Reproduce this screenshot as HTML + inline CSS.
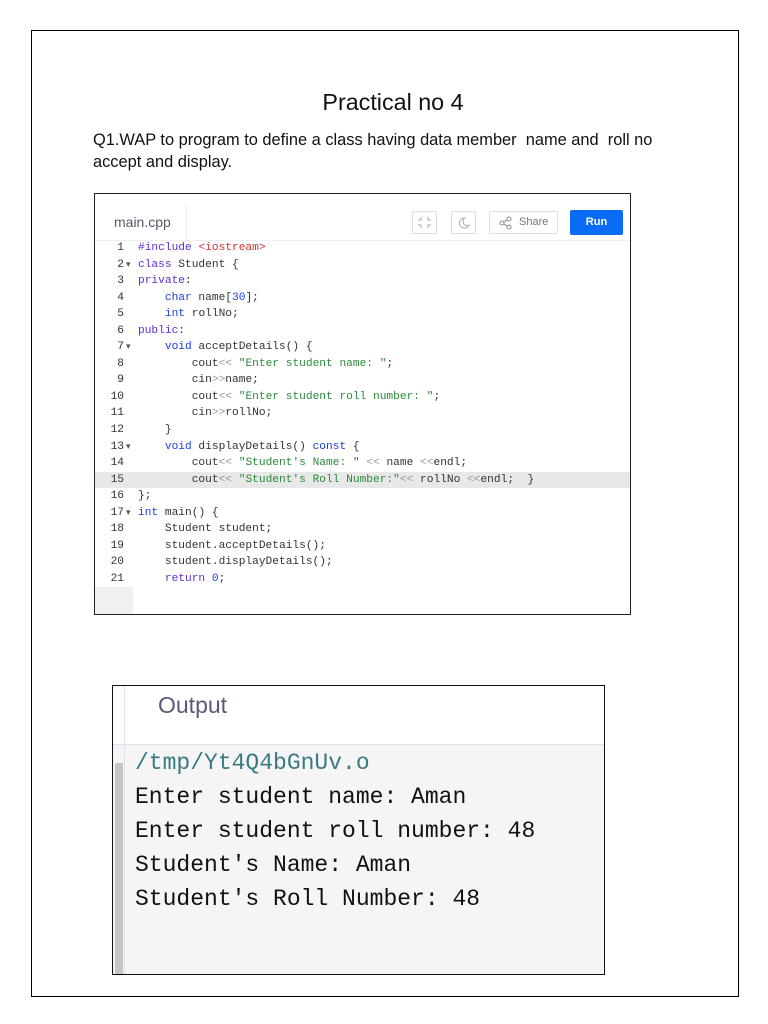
<!DOCTYPE html>
<html><head><meta charset="utf-8"><style>
*{margin:0;padding:0;box-sizing:border-box}
body{width:768px;height:1024px;background:#fff;position:relative;font-family:"Liberation Sans",sans-serif;overflow:hidden}
.abs{position:absolute}
.page{left:31px;top:30px;width:708px;height:967px;border:1px solid #000}
.title{left:0;width:786px;text-align:center;top:89px;font-size:23.3px;color:#111}
.q{left:93px;top:129px;font-size:16.4px;line-height:22px;color:#111}
.code{left:94px;top:193px;width:537px;height:422px;border:1px solid #222;background:#fff}
.tabbar{left:0;top:11px;width:535px;height:36px;border-bottom:1px solid #eceef2}
.tab{left:0;top:0;width:92px;height:36px;border-right:1px solid #eceef2;font-size:14px;color:#55596a;padding:9px 0 0 19px}
.btn{top:6px;height:23px;border:1px solid #dcdfe6;border-radius:2px;background:#fff}
.run{top:5px;height:25px;background:#0a6cf5;color:#fff;font-size:11px;font-weight:bold;text-align:center;line-height:25px;border-radius:2px}
.lines{left:0;top:46px;width:535px;font-family:"Liberation Mono",monospace;font-size:11.2px;color:#333}
.ln{height:16.55px;line-height:16.55px;white-space:pre;position:relative}
.n{display:inline-block;width:29px;text-align:right;color:#333;margin-right:14px}
.d{position:absolute;left:31px;top:0;color:#555;font-size:9px}
.k{color:#5a2fd6}.b{color:#1b3fe0}.s{color:#2a8a3a}.r{color:#d03030}.g{color:#999}
.hl{background:#e8e8e8}
.out{left:112px;top:685px;width:493px;height:290px;border:1px solid #111;background:#f5f5f5}
.ohead{left:0;top:0;width:491px;height:59px;background:#fff;border-bottom:1px solid #dde3ee}
.otxt{font-family:"Liberation Mono",monospace;font-size:23px;color:#111;white-space:pre;left:22px}
</style></head><body>
<div class="abs page"></div>
<div class="abs title">Practical no 4</div>
<div class="abs q">Q1.WAP to program to define a class having data member &nbsp;name and &nbsp;roll no<br>accept and display.</div>
<div class="abs code">
 <div class="abs tabbar">
  <div class="abs tab">main.cpp</div>
  <div class="abs btn" style="left:317px;width:25px"><svg width="23" height="21"><path d="M8 5v3H5M15 5v3h3M8 16v-3H5M15 16v-3h3" stroke="#aaa" fill="none"/></svg></div>
  <div class="abs btn" style="left:356px;width:25px"><svg width="23" height="21"><path d="M13 6a5 5 0 1 0 4 7a4 4 0 0 1-4-7z" stroke="#aaa" fill="none"/></svg></div>
  <div class="abs btn" style="left:394px;width:69px;font-size:11px;color:#777;line-height:21px;padding-left:29px">Share<svg class="abs" style="left:8px;top:4px" width="16" height="14"><circle cx="4" cy="7" r="2" stroke="#888" fill="none"/><circle cx="11" cy="3" r="2" stroke="#888" fill="none"/><circle cx="11" cy="11" r="2" stroke="#888" fill="none"/><path d="M6 6l3-2M6 8l3 2" stroke="#888"/></svg></div>
  <div class="abs run" style="left:475px;width:53px">Run</div>
 </div>
 <div class="abs" style="left:0;top:393px;width:38px;height:27px;background:#f0f0f0"></div>
 <div class="abs lines">
<div class="ln"><span class="n">1</span><span class="k">#include</span> <span class="r">&lt;iostream&gt;</span></div>
<div class="ln"><span class="n">2</span><span class="d">▾</span><span class="k">class</span> Student {</div>
<div class="ln"><span class="n">3</span><span class="k">private</span>:</div>
<div class="ln"><span class="n">4</span>    <span class="b">char</span> name[<span class="b">30</span>];</div>
<div class="ln"><span class="n">5</span>    <span class="b">int</span> rollNo;</div>
<div class="ln"><span class="n">6</span><span class="k">public</span>:</div>
<div class="ln"><span class="n">7</span><span class="d">▾</span>    <span class="b">void</span> acceptDetails() {</div>
<div class="ln"><span class="n">8</span>        cout<span class="g">&lt;&lt;</span> <span class="s">"Enter student name: "</span>;</div>
<div class="ln"><span class="n">9</span>        cin<span class="g">&gt;&gt;</span>name;</div>
<div class="ln"><span class="n">10</span>        cout<span class="g">&lt;&lt;</span> <span class="s">"Enter student roll number: "</span>;</div>
<div class="ln"><span class="n">11</span>        cin<span class="g">&gt;&gt;</span>rollNo;</div>
<div class="ln"><span class="n">12</span>    }</div>
<div class="ln"><span class="n">13</span><span class="d">▾</span>    <span class="b">void</span> displayDetails() <span class="b">const</span> {</div>
<div class="ln"><span class="n">14</span>        cout<span class="g">&lt;&lt;</span> <span class="s">"Student's Name: "</span> <span class="g">&lt;&lt;</span> name <span class="g">&lt;&lt;</span>endl;</div>
<div class="ln hl"><span class="n">15</span>        cout<span class="g">&lt;&lt;</span> <span class="s">"Student's Roll Number:"</span><span class="g">&lt;&lt;</span> rollNo <span class="g">&lt;&lt;</span>endl;  }</div>
<div class="ln"><span class="n">16</span>};</div>
<div class="ln"><span class="n">17</span><span class="d">▾</span><span class="b">int</span> main() {</div>
<div class="ln"><span class="n">18</span>    Student student;</div>
<div class="ln"><span class="n">19</span>    student.acceptDetails();</div>
<div class="ln"><span class="n">20</span>    student.displayDetails();</div>
<div class="ln"><span class="n">21</span>    <span class="k">return</span> <span class="b">0</span>;</div>
 </div>
</div>
<div class="abs out">
 <div class="abs ohead"></div>
 <div class="abs" style="left:11px;top:0;width:1px;height:288px;background:#dde3ee"></div>
 <div class="abs" style="left:2px;top:77px;width:8px;height:211px;background:#c6c6c6"></div>
 <div class="abs" style="left:45px;top:6px;font-size:23px;color:#5a5a78">Output</div>
 <div class="abs otxt" style="top:64px;color:#3a7a82">/tmp/Yt4Q4bGnUv.o</div>
 <div class="abs otxt" style="top:98px">Enter student name: Aman</div>
 <div class="abs otxt" style="top:132px">Enter student roll number: 48</div>
 <div class="abs otxt" style="top:166px">Student's Name: Aman</div>
 <div class="abs otxt" style="top:200px">Student's Roll Number: 48</div>
</div>
</body></html>
